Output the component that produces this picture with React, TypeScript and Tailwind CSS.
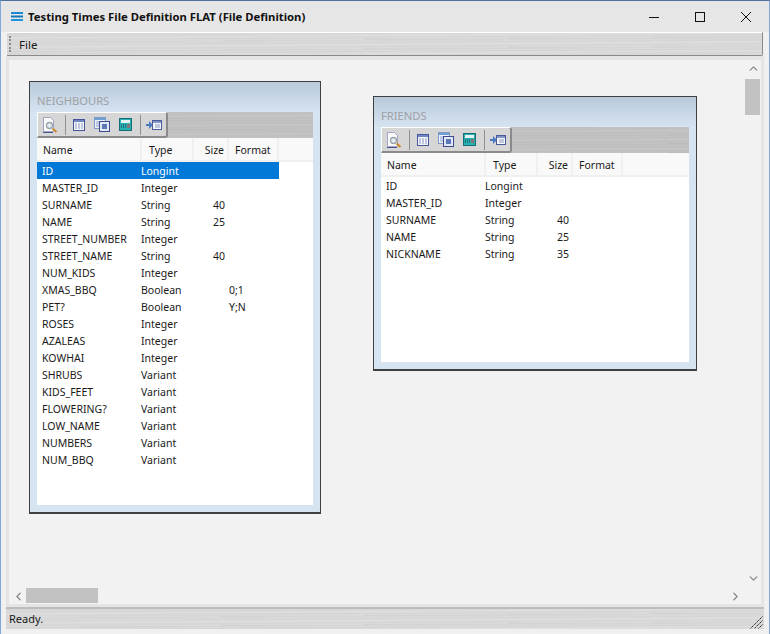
import { ChevronLeft, ChevronRight, ChevronUp, ChevronDown } from 'lucide-react'

type Field = { name: string; type: string; size?: string; format?: string }

const neighbours: Field[] = [
  { name: 'ID', type: 'Longint' },
  { name: 'MASTER_ID', type: 'Integer' },
  { name: 'SURNAME', type: 'String', size: '40' },
  { name: 'NAME', type: 'String', size: '25' },
  { name: 'STREET_NUMBER', type: 'Integer' },
  { name: 'STREET_NAME', type: 'String', size: '40' },
  { name: 'NUM_KIDS', type: 'Integer' },
  { name: 'XMAS_BBQ', type: 'Boolean', format: '0;1' },
  { name: 'PET?', type: 'Boolean', format: 'Y;N' },
  { name: 'ROSES', type: 'Integer' },
  { name: 'AZALEAS', type: 'Integer' },
  { name: 'KOWHAI', type: 'Integer' },
  { name: 'SHRUBS', type: 'Variant' },
  { name: 'KIDS_FEET', type: 'Variant' },
  { name: 'FLOWERING?', type: 'Variant' },
  { name: 'LOW_NAME', type: 'Variant' },
  { name: 'NUMBERS', type: 'Variant' },
  { name: 'NUM_BBQ', type: 'Variant' },
]

const friends: Field[] = [
  { name: 'ID', type: 'Longint' },
  { name: 'MASTER_ID', type: 'Integer' },
  { name: 'SURNAME', type: 'String', size: '40' },
  { name: 'NAME', type: 'String', size: '25' },
  { name: 'NICKNAME', type: 'String', size: '35' },
]

// brushed metal look of the bars
const brushed =
  'bg-[repeating-linear-gradient(179.6deg,#d2d2d2_0px,#dadada_2px,#d5d5d5_3px,#dedede_5px,#d6d6d6_7px,#dbdbdb_9px)]'
const brushedDark =
  'bg-[repeating-linear-gradient(179.7deg,#bbbbbb_0px,#c3c3c3_2px,#bebebe_3px,#c6c6c6_5px,#bfbfbf_7px,#c3c3c3_9px)]'

function Toolbar() {
  return (
    <div className="flex h-[26px] w-[131px] items-center rounded-r-[3px] border-b-2 border-l border-r-2 border-t border-b-[#8a8a8a] border-l-white border-r-[#8a8a8a] border-t-white bg-[#d6d6d6] pl-[5px]">
      <svg width="15" height="16" viewBox="0 0 15 16">
        <path d="M0.5 0.5h7l3 3v11h-10z" fill="#fbfbfb" stroke="#a0a4c0" />
        <path d="M0 15.5h10" stroke="#4a558f" />
        <circle cx="6.5" cy="8.5" r="3" fill="#e2ebf2" stroke="#9aa3aa" strokeWidth="1.3" />
        <path d="M9.5 11.5l4 3.5" stroke="#c98a2e" strokeWidth="2.2" />
      </svg>
      <div className="ml-[7px] h-[20px] w-px bg-[#8f8f8f]" />
      <svg width="12" height="12" viewBox="0 0 12 12" className="ml-[7px]">
        <rect x="0.5" y="0.5" width="11" height="11" fill="#f2f5fa" stroke="#46559c" />
        <rect x="1" y="1" width="10" height="2" fill="#6f88c4" />
        <path d="M2 5h2M5 5h2M8 5h2M2 7h2M5 7h2M8 7h2M2 9h2M5 9h2M8 9h2" stroke="#8e9ac2" />
      </svg>
      <svg width="16" height="15" viewBox="0 0 16 15" className="ml-[9px] -mt-[1px]">
        <rect x="0.5" y="0.5" width="11" height="11" fill="#edf2f9" stroke="#7f9ac8" />
        <rect x="1" y="1" width="10" height="2" fill="#6fa0d4" />
        <path d="M2 5h3M2 7h3M2 9h3" stroke="#8ea3cc" />
        <rect x="5.5" y="4.5" width="10" height="10" fill="#dfe8f4" stroke="#3d4a94" />
        <rect x="8" y="7" width="5" height="5" fill="#5c78b8" />
      </svg>
      <svg width="13" height="13" viewBox="0 0 13 13" className="ml-[9px]">
        <rect x="0.5" y="0.5" width="12" height="12" fill="#27b2b2" stroke="#1a6b78" />
        <rect x="2" y="2" width="9" height="3" fill="#e4f4f4" />
        <path d="M2 7h1M4 7h1M6 7h1M2 9h1M4 9h1M6 9h1" stroke="#163a5a" />
        <path d="M8 7h3M8 9h3" stroke="#e03a3a" />
      </svg>
      <div className="ml-[8px] h-[20px] w-px bg-[#8f8f8f]" />
      <svg width="16" height="10" viewBox="0 0 16 10" className="ml-[5px]">
        <path d="M0 4h3V1l4 4-4 4V6H0z" fill="#4a7cc4" />
        <rect x="6.5" y="0.5" width="9" height="9" fill="#f4f7fb" stroke="#4b5a9c" />
        <rect x="7" y="1" width="8" height="2" fill="#7f94c6" />
        <path d="M9 5h5M9 7h5" stroke="#8b97c0" />
      </svg>
    </div>
  )
}

function FieldPanel({
  title,
  fields,
  selected,
  className,
}: {
  title: string
  fields: Field[]
  selected?: number
  className: string
}) {
  return (
    <div className={`absolute flex flex-col border border-b-2 border-[#404040] bg-[#d6e3f1] ${className}`}>
      <div className="flex h-[30px] shrink-0 items-end bg-gradient-to-b from-[#b8cadb] to-[#d6e3f1] px-[7px] pb-[4px] text-[11.2px] leading-[15px] text-[#a0a0a4]">
        {title}
      </div>
      <div className={`${brushedDark} mx-[7px] h-[26px] shrink-0`}>
        <Toolbar />
      </div>
      <div className="mx-[7px] mb-[7px] flex-1 bg-white">
        <div className="flex h-[24px] border-b-2 border-[#f0f0f0] bg-[#f9f9f9] text-[#1a1a1a]">
          <div className="w-[105px] border-r-2 border-[#f0f0f0] pl-[6px] pt-[5px]">Name</div>
          <div className="w-[52px] border-r-2 border-[#f0f0f0] pl-[7px] pt-[5px]">Type</div>
          <div className="w-[35px] border-r-2 border-[#f0f0f0] pr-[3px] pt-[5px] text-right">Size</div>
          <div className="w-[50px] border-r-2 border-[#f0f0f0] pl-[6px] pt-[5px]">Format</div>
        </div>
        {fields.map((f, i) => (
          <div
            key={f.name}
            className={`flex h-[17px] w-[242px] items-start pt-[2px] ${i === selected ? 'bg-[#0078d7] text-white' : 'text-[#1a1a1a]'}`}
          >
            <div className="w-[104px] pl-[5px]">{f.name}</div>
            <div className="w-[52px]">{f.type}</div>
            <div className="w-[35px] pl-[20px]">{f.size}</div>
            <div className="w-[50px] pl-px">{f.format}</div>
          </div>
        ))}
      </div>
    </div>
  )
}

export default function App() {
  return (
    <div className="flex h-[634px] w-[770px] flex-col overflow-hidden border-x border-t border-x-[#7fa6d6] border-t-[#4f6f9f] bg-[#f0f0f0] font-['Noto_Sans','Liberation_Sans',sans-serif] text-[10.5px] leading-[15px]">
      <div className="flex h-[31px] shrink-0 items-center bg-[#e6e6e6]">
        <svg width="12" height="9" viewBox="0 0 12 9" className="ml-[10px]">
          <path d="M0 0h12v2H0z" fill="#1a8ad0" />
          <path d="M0 3.5h12v2H0z" fill="#1278bc" />
          <path d="M0 7h12v2H0z" fill="#1c96d8" />
        </svg>
        <div className="ml-[5px] text-[11.3px] font-bold text-[#111]">Testing Times File Definition FLAT (File Definition)</div>
        <div className="ml-auto flex items-center">
          <svg width="10" height="10" viewBox="0 0 10 10">
            <path d="M0 5.5h10" stroke="#111" />
          </svg>
          <svg width="10" height="10" viewBox="0 0 10 10" className="ml-[36px]">
            <rect x="0.5" y="0.5" width="9" height="9" fill="none" stroke="#111" />
          </svg>
          <svg width="10" height="10" viewBox="0 0 10 10" className="ml-[36px] mr-[18px]">
            <path d="M0 0l10 10M10 0L0 10" stroke="#111" />
          </svg>
        </div>
      </div>

      <div className="flex flex-col px-[5px]">
        <div className={`${brushed} mx-px flex h-[24px] shrink-0 items-center rounded-br-[2px] border-b border-r border-t border-b-[#8a8a8a] border-r-[#8a8a8a] border-t-white text-[11.5px]`}>
          <div className="ml-[2px] h-[16px] w-[2px] border-l-2 border-dotted border-[#8a8a8a]" />
          <div className="ml-[8px] text-[#1a1a1a]">File</div>
        </div>

        <div className="bg-[#e4e4e4] px-[3px] pb-[3px] pt-[4px]">
          <div className="relative flex h-[544px] bg-[#f2f2f2]">
            <div className="relative flex-1 overflow-hidden">
              <FieldPanel
                title="NEIGHBOURS"
                fields={neighbours}
                selected={0}
                className="left-[20px] top-[21px] h-[433px] w-[292px]"
              />
              <FieldPanel
                title="FRIENDS"
                fields={friends}
                className="left-[364px] top-[36px] h-[275px] w-[324px]"
              />
            </div>
            <div className="flex w-[16px] flex-col items-center">
              <ChevronUp size={13} strokeWidth={2.4} className="mt-[2px] text-[#8a8a8a]" />
              <div className="mt-[4px] h-[36px] w-[15px] self-start bg-[#c2c2c2]" />
              <ChevronDown size={13} strokeWidth={2.4} className="mb-[19px] mt-auto text-[#8a8a8a]" />
            </div>
            <div className="absolute bottom-0 left-0 flex h-[16px] w-[736px] items-center">
              <ChevronLeft size={13} strokeWidth={2.4} className="ml-[3px] text-[#8a8a8a]" />
              <div className="ml-px h-[15px] w-[72px] self-start bg-[#c2c2c2]" />
              <ChevronRight size={13} strokeWidth={2.4} className="ml-auto mr-[3px] text-[#8a8a8a]" />
            </div>
          </div>
        </div>

        <div className={`${brushed} flex h-[22px] shrink-0 items-center justify-between border-t-2 border-t-[#bcbcbc] text-[11px]`}>
          <div className="ml-[3px] pb-[2px] text-[#1a1a1a]">Ready.</div>
          <svg width="13" height="13" viewBox="0 0 13 13" className="mr-px mt-[6px]">
            <path d="M12.5 0.5L0.5 12.5M12.5 4.5L4.5 12.5M12.5 8.5L8.5 12.5" stroke="#222" strokeDasharray="1.5 0.7" />
          </svg>
        </div>
      </div>
    </div>
  )
}
